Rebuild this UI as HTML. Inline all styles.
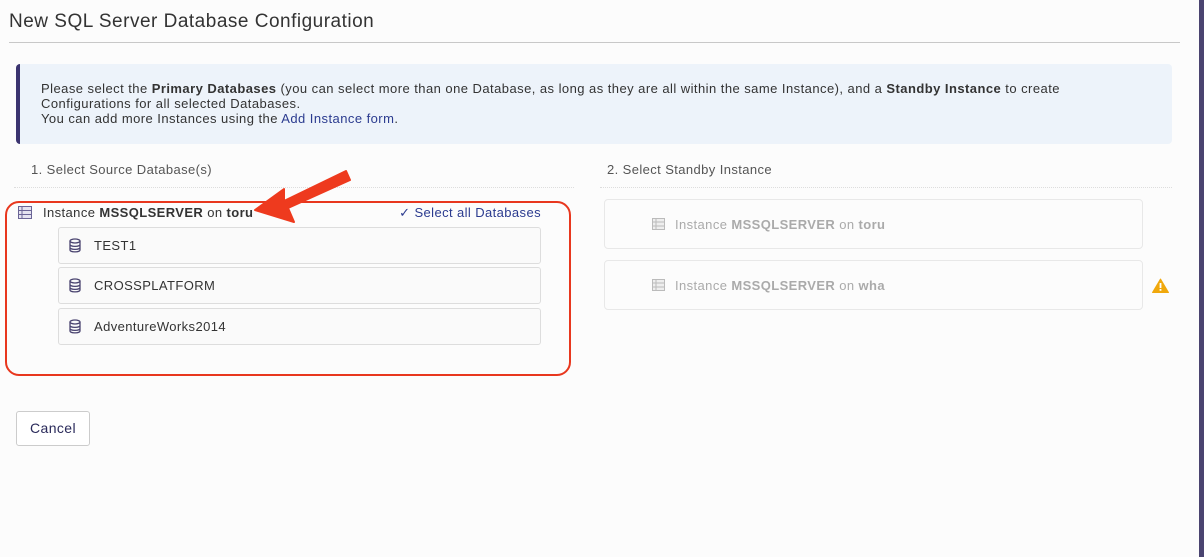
<!DOCTYPE html>
<html><head><meta charset="utf-8"><style>
*{box-sizing:border-box;margin:0;padding:0}
body{width:1204px;height:557px;background:#fcfcfc;font-family:"Liberation Sans",sans-serif;color:#333;position:relative;overflow:hidden;letter-spacing:0.4px}
.abs{position:absolute}
h1{position:absolute;left:9px;top:11px;font-size:19px;font-weight:normal;color:#333;letter-spacing:0.5px}
.hr{position:absolute;left:9px;top:42px;width:1171px;height:1px;background:#c8c8c8}
.info{position:absolute;left:16px;top:64px;width:1156px;height:80px;background:#edf3fa;border-left:4px solid #3b3470;border-radius:4px;padding:17px 0 0 21px;font-size:13px;line-height:15px;color:#333;letter-spacing:0.45px}
.info a{color:#2b3b8f;text-decoration:none}
.sec{position:absolute;font-size:13px;color:#555}
.dots{position:absolute;height:1px;border-top:1px dotted #ddd}
.db{position:absolute;left:58px;width:483px;height:37px;border:1px solid #ddd;border-radius:3px;background:#fafafa;font-size:13px;color:#333;padding:10px 0 0 35px}
.db svg{position:absolute;left:10px;top:10px}
.inst{position:absolute;left:604px;width:539px;height:50px;border:1px solid #e8e8e8;border-radius:4px;background:#fcfcfc;font-size:13px;color:#aaa;padding:17px 0 0 70px}
.inst svg{position:absolute;left:47px;top:18px}
</style></head><body>
<h1>New SQL Server Database Configuration</h1>
<div class="hr"></div>
<div class="info">Please select the <b>Primary Databases</b> (you can select more than one Database, as long as they are all within the same Instance), and a <b>Standby Instance</b> to create<br>Configurations for all selected Databases.<br>You can add more Instances using the <a>Add Instance form</a>.</div>
<div class="sec" style="left:31px;top:162px">1. Select Source Database(s)</div>
<div class="sec" style="left:607px;top:162px">2. Select Standby Instance</div>
<div class="dots" style="left:14px;top:187px;width:560px"></div>
<div class="dots" style="left:600px;top:187px;width:572px"></div>

<svg class="abs" style="left:18px;top:206px" width="14" height="13"><rect x="0.5" y="0.5" width="13" height="12" fill="#e4e2f0" stroke="#6a6496"/><path d="M1 4.5H13M1 8.5H13M4 1V12" stroke="#6a6496"/></svg>
<div class="abs" style="left:43px;top:205px;font-size:13px">Instance <b>MSSQLSERVER</b> on <b>toru</b></div>
<div class="abs" style="right:663px;top:205px;font-size:13px;color:#2b3b8f">✓ Select all Databases</div>

<div class="db" style="top:227px"><svg width="12" height="15"><ellipse cx="6" cy="3" rx="5" ry="2" fill="none" stroke="#4a4470" stroke-width="1.3"/><path d="M1 3V12C1 14.5 11 14.5 11 12V3M1 6.5C1 9 11 9 11 6.5M1 9.5C1 12 11 12 11 9.5" fill="none" stroke="#4a4470" stroke-width="1.3"/></svg>TEST1</div>
<div class="db" style="top:267px"><svg width="12" height="15"><ellipse cx="6" cy="3" rx="5" ry="2" fill="none" stroke="#4a4470" stroke-width="1.3"/><path d="M1 3V12C1 14.5 11 14.5 11 12V3M1 6.5C1 9 11 9 11 6.5M1 9.5C1 12 11 12 11 9.5" fill="none" stroke="#4a4470" stroke-width="1.3"/></svg>CROSSPLATFORM</div>
<div class="db" style="top:308px"><svg width="12" height="15"><ellipse cx="6" cy="3" rx="5" ry="2" fill="none" stroke="#4a4470" stroke-width="1.3"/><path d="M1 3V12C1 14.5 11 14.5 11 12V3M1 6.5C1 9 11 9 11 6.5M1 9.5C1 12 11 12 11 9.5" fill="none" stroke="#4a4470" stroke-width="1.3"/></svg>AdventureWorks2014</div>

<div class="abs" style="left:5px;top:201px;width:566px;height:175px;border:2.5px solid #e8371e;border-radius:14px"></div>
<svg class="abs" style="left:240px;top:160px" width="120" height="65"><polygon points="15,50 44,29 44,41 106,11 110,20 48,48 54,62" fill="#ee3a1e" stroke="#ee3a1e" stroke-width="2" stroke-linejoin="round"/></svg>

<div class="inst" style="top:199px"><svg width="13" height="12"><rect x="0.5" y="0.5" width="12" height="11" fill="#eee" stroke="#bbb"/><path d="M1 4H12M1 8H12M4 1V11" stroke="#bbb"/></svg>Instance <b>MSSQLSERVER</b> on <b>toru</b></div>
<div class="inst" style="top:260px"><svg width="13" height="12"><rect x="0.5" y="0.5" width="12" height="11" fill="#eee" stroke="#bbb"/><path d="M1 4H12M1 8H12M4 1V11" stroke="#bbb"/></svg>Instance <b>MSSQLSERVER</b> on <b>wha</b></div>
<svg class="abs" style="left:1152px;top:278px" width="17" height="15"><path d="M8.5 1L16.5 14.5H0.5Z" fill="#f0a80c" stroke="#f0a80c" stroke-linejoin="round"/><rect x="7.6" y="5" width="1.8" height="5" fill="#fff"/><rect x="7.6" y="11" width="1.8" height="1.8" fill="#fff"/></svg>

<div class="abs" style="left:16px;top:411px;width:74px;height:35px;border:1px solid #ccc;border-radius:3px;background:#fff;font-size:14px;color:#2a2a5a;text-align:center;line-height:33px">Cancel</div>

<div class="abs" style="left:1199px;top:0;width:5px;height:557px;background:#4a4470"></div>
</body></html>
